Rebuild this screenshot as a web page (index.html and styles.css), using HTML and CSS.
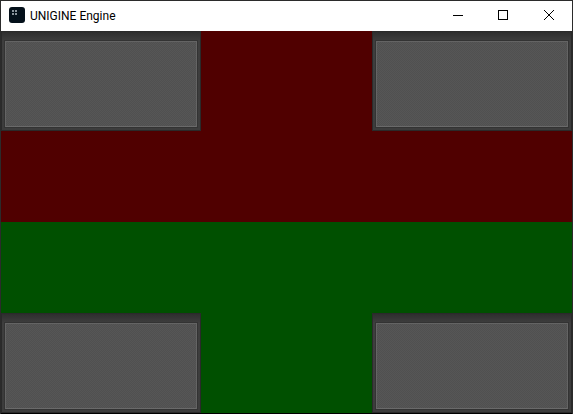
FILE: index.html
```html
<!DOCTYPE html>
<html lang="en">
<head>
  <meta charset="UTF-8">
  <meta name="viewport" content="width=device-width, initial-scale=1.0">
  <title>UNIGINE Engine</title>
  <link rel="stylesheet" href="styles.css">
</head>
<body>
  <div class="ventana">
    <div class="barra">
      <svg class="logo" width="16" height="16" viewBox="0 0 16 16">
        <rect width="16" height="16" rx="3" fill="#04101a"/>
        <rect x="3" y="3" width="2" height="2" fill="#8a949c"/>
        <rect x="6" y="3" width="2" height="2" fill="#8a949c"/>
        <rect x="3" y="6" width="2" height="2" fill="#8a949c"/>
        <rect x="6" y="6" width="2" height="2" fill="#8a949c"/>
      </svg>
      <span class="titulo">UNIGINE Engine</span>
      <div class="botones">
        <div class="boton">
          <svg width="10" height="10" viewBox="0 0 10 10"><path d="M0 5.5H10" stroke="#000" fill="none"/></svg>
        </div>
        <div class="boton">
          <svg width="10" height="10" viewBox="0 0 10 10"><rect x="0.5" y="0.5" width="9" height="9" stroke="#000" fill="none"/></svg>
        </div>
        <div class="boton cerrar">
          <svg width="10" height="10" viewBox="0 0 10 10"><path d="M0 0L10 10M10 0L0 10" stroke="#000" fill="none"/></svg>
        </div>
      </div>
    </div>
    <div class="contenido">
      <div class="franja roja">
        <div class="panel"><div class="interior"></div></div>
        <div class="panel"><div class="interior"></div></div>
      </div>
      <div class="franja verde">
        <div class="panel"><div class="interior"></div></div>
        <div class="panel"><div class="interior"></div></div>
      </div>
    </div>
  </div>
</body>
</html>
```

FILE: styles.css
```css
html, body {
  height: 100%;
}

body {
  margin: 0;
  font-family: Roboto, 'Noto Sans', sans-serif;
  background: #000;
}

.ventana {
  display: flex;
  flex-direction: column;
  height: 100%;
  box-sizing: border-box;
  border: 1px solid #2b2b2b;
  border-bottom: 0;
}

/* Barra de titulo */
.barra {
  display: flex;
  align-items: center;
  height: 30px;
  flex: none;
  background-color: #fff;
}

.logo {
  margin-left: 8px;
  margin-right: 5px;
  margin-bottom: 2px;
}

.titulo {
  font-size: 12px;
  color: #000;
}

.botones {
  display: flex;
  margin-left: auto;
  margin-right: 1px;
}

.boton {
  display: flex;
  align-items: center;
  justify-content: center;
  width: 45px;
  height: 30px;
  box-sizing: border-box;
  padding-bottom: 2px;
}

.cerrar {
  margin-left: 1px;
}

/* Zona de la ventana */
.contenido {
  display: flex;
  flex-direction: column;
  flex: 1;
}

.franja {
  display: flex;
  justify-content: space-between;
  height: 191px;
}

.roja {
  background-color: #500000;
  align-items: flex-start;
}

.verde {
  background-color: #005000;
  align-items: flex-end;
}

.panel {
  width: 200px;
  height: 100px;
  box-sizing: border-box;
  padding: 9px 3px 3px 3px;
  background: linear-gradient(#2e2e2e, #3e3e3e 9px, #3c3c3c);
  border: 1px solid #2a2a2a;
}

.interior {
  height: 100%;
  box-sizing: border-box;
  background-color: #535353;
  background-image: repeating-conic-gradient(#505050 0 25%, #565656 0 50%);
  background-size: 2px 2px;
  border: 1px solid #646464;
  border-bottom-color: #6a6a6a;
  box-shadow: 0 0 0 1px #333;
}
```
